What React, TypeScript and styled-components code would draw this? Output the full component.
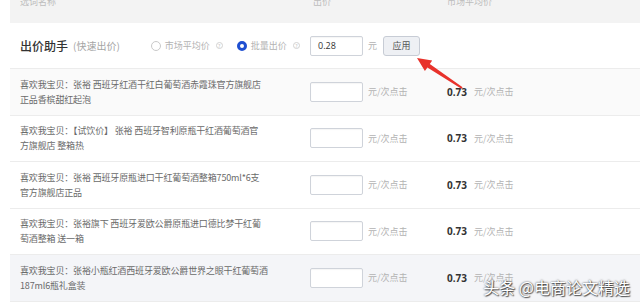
import React from "react";
import styled, { createGlobalStyle } from "styled-components";

const Global = createGlobalStyle`
  html, body { margin: 0; padding: 0; background: #fff; }
  body { font-family: "Noto Sans CJK SC", "Noto Sans", sans-serif; }
  * { box-sizing: border-box; }
`;

const Root = styled.div`
  position: relative;
  width: 640px;
  height: 306px;
  overflow: hidden;
  background: #fff;
`;

const Table = styled.div`
  margin: -6px 0 0 10px;
`;

const GridRow = styled.div`
  display: grid;
  grid-template-columns: 300px 137px 1fr;
  align-items: center;
`;

const HeaderRow = styled(GridRow)`
  height: 29px;
  align-items: start;
  background: #f3f3f3;
  color: #bdbdbd;
  font-size: 9px;
  line-height: 16px;
`;

const HeadCell = styled.div<{ $pad?: number }>`
  padding-left: ${(p) => p.$pad ?? 0}px;
`;

const AssistRow = styled(GridRow)`
  height: 46px;
  border-bottom: 1px solid #ececec;
`;

const AssistLeft = styled.div`
  display: flex;
  align-items: center;
  padding-left: 10px;
  white-space: nowrap;
  & > * { flex-shrink: 0; }
`;

const Title = styled.span`
  font-size: 12px;
  font-weight: 500;
  color: #333;
  line-height: 16px;
`;

const SubTitle = styled.span`
  font-size: 10px;
  color: #a5a5a5;
  margin-left: 5px;
  margin-right: 31px;
  line-height: 16px;
`;

const RadioItem = styled.label`
  display: flex;
  align-items: center;
  font-size: 9px;
  color: #b3b3b3;
  margin-right: 14px;
  white-space: nowrap;
`;

const RadioDot = styled.span<{ $checked?: boolean }>`
  width: 10px;
  height: 10px;
  border-radius: 50%;
  margin-right: 4px;
  flex-shrink: 0;
  border: ${(p) => (p.$checked ? "3px solid #1f4fd1" : "1px solid #c9c9c9")};
  background: #fff;
`;

const Help = styled.span`
  width: 7px;
  height: 7px;
  flex-shrink: 0;
  border-radius: 50%;
  border: 1px solid #d2d2d2;
  margin-left: 6px;
  font-size: 5px;
  line-height: 5px;
  color: #c2c2c2;
  text-align: center;
`;

const BidCell = styled.div`
  display: flex;
  align-items: center;
`;

const Input = styled.div<{ $w?: number }>`
  width: ${(p) => p.$w ?? 53}px;
  height: 20px;
  border: 1px solid #cfd3da;
  border-radius: 2px;
  background: #fff;
  font-family: "Open Sans", "Noto Sans", sans-serif;
  font-size: 9px;
  color: #333;
  line-height: 18px;
  padding-left: 7px;
  box-shadow: inset 0 1px 1px rgba(0, 0, 0, 0.04);
`;

const Unit = styled.span<{ $gap?: number }>`
  font-size: 9px;
  color: #b3b3b3;
  margin-left: ${(p) => p.$gap ?? 5}px;
  white-space: nowrap;
`;

const ApplyButton = styled.button`
  margin-left: 6px;
  width: 37px;
  height: 20px;
  border: 1px solid #c7ccd5;
  border-radius: 3px;
  background: #eef0f4;
  font-family: "Noto Sans CJK SC", sans-serif;
  font-size: 9px;
  color: #555;
  padding: 0;
  line-height: 18px;
`;

const ItemRow = styled(GridRow)<{ $bg: string }>`
  height: 46.5px;
  background: ${(p) => p.$bg};
  border-bottom: 1px solid #ececec;
`;

const Keyword = styled.div`
  padding-left: 10px;
  font-size: 9px;
  line-height: 15px;
  color: #6a6a6a;
  white-space: nowrap;
  letter-spacing: -0.15px;
`;

const MarketCell = styled.div`
  display: flex;
  align-items: center;
`;

const Price = styled.span`
  font-family: "Open Sans", "Noto Sans", sans-serif;
  font-weight: 700;
  font-size: 10px;
  color: #333;
`;

const Watermark = styled.div`
  position: absolute;
  right: 10px;
  top: 277px;
  font-family: "Noto Sans CJK SC", sans-serif;
  font-size: 16px;
  line-height: 20px;
  color: #fff;
  text-shadow: 0 0 2px rgba(0, 0, 0, 0.8), 1px 1px 1px rgba(0, 0, 0, 0.6);
`;

const ArrowLayer = styled.svg`
  position: absolute;
  left: 0;
  top: 0;
  pointer-events: none;
`;

const rows: { lines: string[]; bg: string }[] = [
  { lines: ["喜欢我宝贝：张裕 西班牙红酒干红白葡萄酒赤霞珠官方旗舰店", "正品香槟甜红起泡"], bg: "#fafafa" },
  { lines: ["喜欢我宝贝：【试饮价】 张裕 西班牙智利原瓶干红酒葡萄酒官", "方旗舰店 整箱热"], bg: "#ffffff" },
  { lines: ["喜欢我宝贝：张裕 西班牙原瓶进口干红葡萄酒整箱750ml*6支", "官方旗舰店正品"], bg: "#ffffff" },
  { lines: ["喜欢我宝贝：张裕旗下 西班牙爱欧公爵原瓶进口德比梦干红葡", "萄酒整箱 送一箱"], bg: "#ffffff" },
  { lines: ["喜欢我宝贝：张裕小瓶红酒西班牙爱欧公爵世界之眼干红葡萄酒", "187ml6瓶礼盒装"], bg: "#f4f5f8" },
];

export default function App() {
  return (
    <Root>
      <Global />
      <Table>
        <HeaderRow>
          <HeadCell $pad={10}>选词名称</HeadCell>
          <HeadCell $pad={3}>出价</HeadCell>
          <HeadCell>市场平均价</HeadCell>
        </HeaderRow>
        <AssistRow>
          <AssistLeft>
            <Title>出价助手</Title>
            <SubTitle>(快速出价)</SubTitle>
            <RadioItem>
              <RadioDot />
              市场平均价
              <Help>?</Help>
            </RadioItem>
            <RadioItem>
              <RadioDot $checked />
              批量出价
              <Help>?</Help>
            </RadioItem>
          </AssistLeft>
          <BidCell>
            <Input>0.28</Input>
            <Unit>元</Unit>
            <ApplyButton>应用</ApplyButton>
          </BidCell>
          <div />
        </AssistRow>
        {rows.map((r, i) => (
          <ItemRow key={i} $bg={r.bg}>
            <Keyword>
              {r.lines.map((l, j) => (
                <div key={j}>{l}</div>
              ))}
            </Keyword>
            <BidCell>
              <Input />
              <Unit>元/次点击</Unit>
            </BidCell>
            <MarketCell>
              <Price>0.73</Price>
              <Unit $gap={7}>元/次点击</Unit>
            </MarketCell>
          </ItemRow>
        ))}
      </Table>
      <ArrowLayer width="640" height="306" viewBox="0 0 640 306">
        <polygon
          points="417,58 432.2,60.6 429.8,64.0 462.6,87.2 461.4,88.8 427.4,67.6 424.9,71.0"
          fill="#e8322b"
        />
      </ArrowLayer>
      <Watermark>头条 @电商论文精选</Watermark>
    </Root>
  );
}
